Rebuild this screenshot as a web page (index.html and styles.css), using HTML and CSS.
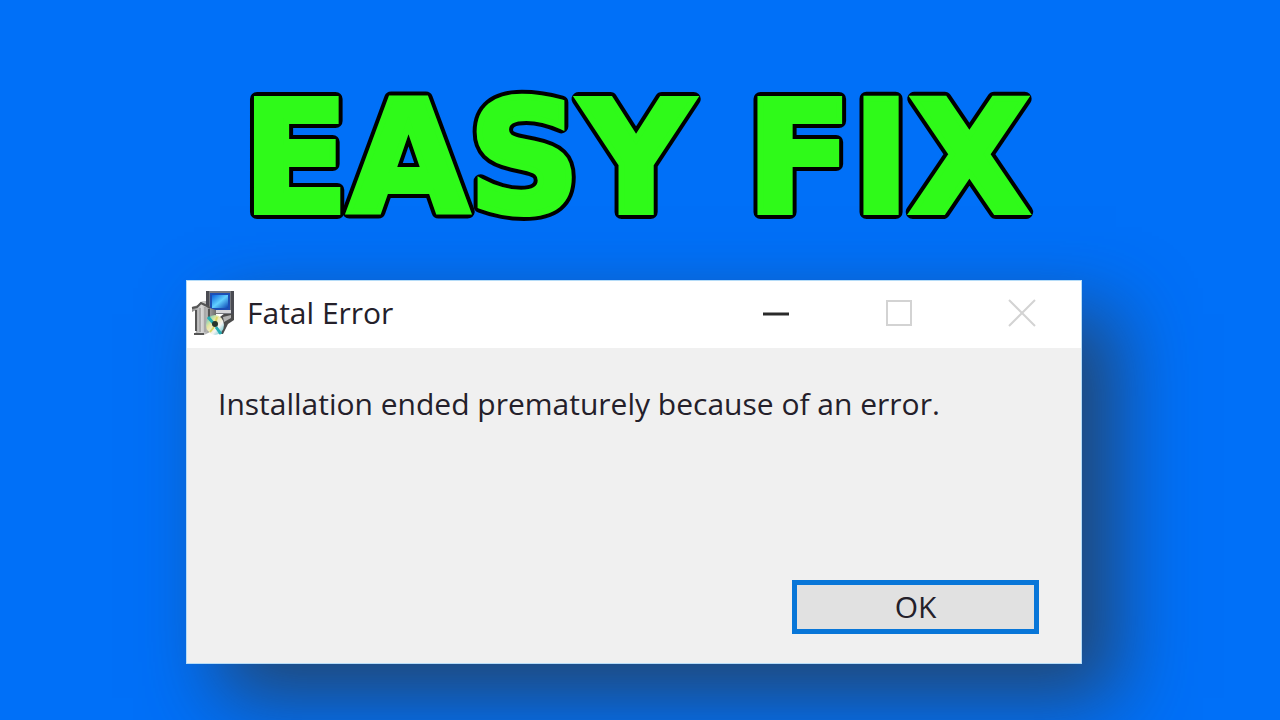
FILE: index.html
```html
<!DOCTYPE html>
<html lang="en">
<head>
  <meta charset="UTF-8">
  <title>Easy Fix - Fatal Error</title>
  <link rel="stylesheet" href="styles.css">
</head>
<body>
  <h1 class="headline">
    <svg class="headline-svg" width="820" height="190">
      <text id="headline-text" x="50%" y="155" text-anchor="middle">EASY FIX</text>
      <use class="headline-face" href="#headline-text"/>
    </svg>
  </h1>

  <!-- error dialog -->
  <main class="dialog" role="alertdialog" aria-labelledby="dialog-title" aria-describedby="dialog-message">
    <header class="titlebar">
      <svg class="app-icon" viewBox="0 0 44 46" aria-hidden="true">
        <defs>
          <linearGradient id="screen" x1="0" y1="0" x2="1" y2="1">
            <stop offset="0" stop-color="#0a63dc"/>
            <stop offset="0.5" stop-color="#62d0ff"/>
            <stop offset="1" stop-color="#0b45b4"/>
          </linearGradient>
          <linearGradient id="box" x1="0" y1="0" x2="1" y2="0">
            <stop offset="0" stop-color="#8c8c8c"/>
            <stop offset="0.4" stop-color="#d8d8d8"/>
            <stop offset="1" stop-color="#6c6c6c"/>
          </linearGradient>
          <linearGradient id="disc" x1="0" y1="0" x2="1" y2="1">
            <stop offset="0" stop-color="#46c8c8"/>
            <stop offset="0.35" stop-color="#e8e6a0"/>
            <stop offset="0.65" stop-color="#f4f4f4"/>
            <stop offset="1" stop-color="#35b5c0"/>
          </linearGradient>
        </defs>
        <path d="M34 23h9v7l-6 4-5 10h-8V31z" fill="#4c4c4c"/>
        <path d="M32 27l8-2v3l-7 4z" fill="#b2b2b2"/>
        <path d="M15 1h28v23H15z" fill="#77797f"/>
        <path d="M15 1h3v20h-3zM40 1h3v23h-3z" fill="#4a4b52"/>
        <path d="M19 3h20v17H19z" fill="#1d4fb4"/>
        <path d="M21 5h16v13H21z" fill="url(#screen)"/>
        <path d="M19 20h21v3H19z" fill="#d5d5d8"/>
        <path d="M1 17l6-2 4-4h4v4l4 3 6 2v24l-6-2-6 3H3l2-3V20l-4 2z" fill="url(#box)"/>
        <path d="M1 18l5-1 4-4 4 2 5 3M5 20v21M3 44h10M18 19v23" fill="none" stroke="#555" stroke-width="2"/>
        <path d="M9 18v24M14 17v25" fill="none" stroke="#a9a9a9" stroke-width="2"/>
        <ellipse cx="24" cy="35" rx="9" ry="10" fill="url(#disc)"/>
        <path d="M17 27l6 7M25 37l5 7" stroke="#24aeb4" stroke-width="3"/>
        <path d="M26 27l-2 7M23 37l-4 5" stroke="#dbd765" stroke-width="2"/>
        <circle cx="24" cy="34" r="3" fill="#26352c"/>
      </svg>
      <h2 class="title" id="dialog-title">Fatal Error</h2>
      <div class="window-controls">
        <button class="control minimize" aria-label="Minimize">
          <svg viewBox="0 0 30 30"><path d="M2 16h26"/></svg>
        </button>
        <button class="control" aria-label="Maximize" disabled>
          <svg viewBox="0 0 30 30"><path d="M3 3h24v24H3z"/></svg>
        </button>
        <button class="control" aria-label="Close" disabled>
          <svg viewBox="0 0 30 30"><path d="M2 2l26 26M28 2L2 28"/></svg>
        </button>
      </div>
    </header>
    <p class="message" id="dialog-message">Installation ended prematurely because of an error.</p>
    <footer class="actions">
      <button class="ok-btn">OK</button>
    </footer>
  </main>
</body>
</html>
```
FILE: styles.css
```css
* {
  box-sizing: border-box;
}
body {
  margin: 0;
  min-height: 100vh;
  background-color: #0070f8;
  font-family: "Open Sans", "Noto Sans", sans-serif;
  color: #24202a;
}
.headline {
  margin: 0;
  padding: 57px 8px 0 0;
  display: flex;
  justify-content: center;
  font-family: "DejaVu Sans", sans-serif;
  font-size: 155px;
  font-weight: 700;
  line-height: 1;
}
.headline-svg {
  display: block;
  overflow: visible;
  fill: #000;
  stroke: #000;
  stroke-width: 14px;
  stroke-linejoin: round;
}
/* green face drawn over the black outline */
.headline-face {
  fill: #2ffa19;
  stroke: #2ffa19;
  stroke-width: 6px;
  stroke-linejoin: miter;
}
.dialog {
  width: 70%;
  min-height: 384px;
  margin: 33px 0 0 186px;
  display: flex;
  flex-direction: column;
  background-color: #f0f0f0;
  border: 1px solid #b5dcf8;
  box-shadow: 34px 34px 72px rgba(44, 61, 81, 0.8);
}
.titlebar {
  display: flex;
  align-items: center;
  height: 67px;
  padding: 0 29px 4px 4px;
  background-color: #fff;
}
.app-icon {
  width: 44px;
  height: 46px;
}
.title {
  margin: 0 0 0 12px;
  font-size: 30px;
  font-weight: 400;
  line-height: 40px;
}
.window-controls {
  margin-left: auto;
  display: flex;
  gap: 63px;
}
.control {
  width: 60px;
  height: 60px;
  padding: 15px;
  border: none;
  background: none;
  stroke: #d3d3d3;
}
.control svg {
  display: block;
  width: 30px;
  height: 30px;
  fill: none;
  stroke-width: 2px;
}
.minimize {
  stroke: #2a2a2a;
}
.minimize svg {
  stroke-width: 3px;
}
.message {
  margin: 36px 31px 0;
  font-size: 30px;
  line-height: 40px;
}
.actions {
  margin-top: auto;
  padding: 0 42px 29px;
  display: flex;
  justify-content: flex-end;
}
.ok-btn {
  width: 247px;
  height: 54px;
  border: 5px solid #0876d8;
  background-color: #e1e1e1;
  font-family: inherit;
  font-size: 30px;
  line-height: 40px;
  color: inherit;
  padding: 0;
}
```
